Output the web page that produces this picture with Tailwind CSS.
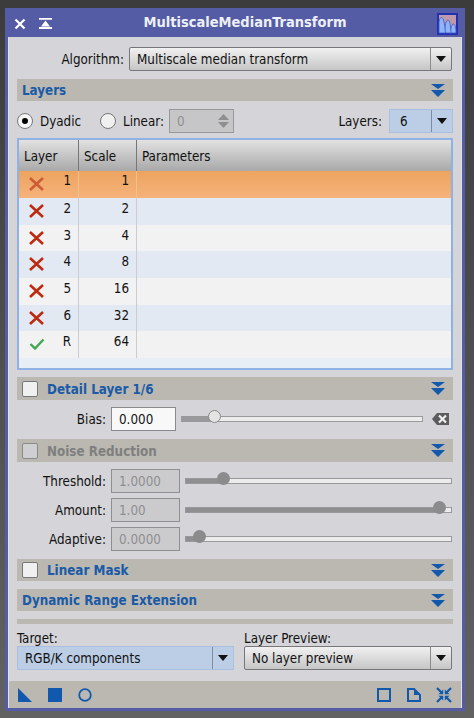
<!DOCTYPE html>
<html>
    <head>
        <meta name="viewport" content="width=device-width, initial-scale=1.0">
        <title>MultiscaleMedianTransform</title>
        <script src="https://cdn.jsdelivr.net/npm/@tailwindcss/browser@4"></script>
    </head>
    <body class="w-[474px] h-[718px] overflow-hidden bg-gradient-to-b from-[#3c3c3c] to-[#626262] font-['DejaVu_Sans_Condensed','DejaVu_Sans',sans-serif] text-[13.3px] text-[#111]">
        <div class="ml-[5px] mt-[8px] w-[460px] h-[703px] bg-[#545ca6] px-[3px] pb-[3px] flex flex-col">
            <!-- title bar -->
            <div class="h-[29px] shrink-0 flex items-center relative">
                <svg class="absolute left-[6px] top-[10px]" width="12" height="12" viewBox="0 0 12 12"><path d="M1.5 1.5L10.5 10.5M10.5 1.5L1.5 10.5" stroke="#fff" stroke-width="2.2"/></svg>
                <svg class="absolute left-[31px] top-[10px]" width="13" height="11" viewBox="0 0 13 11"><path d="M0 0H13V1.8H0ZM6.5 2.6L11 8.6H2ZM0 9H13V11H0Z" fill="#fff"/></svg>
                <div class="w-full text-center font-bold text-[14.5px] text-[#eef0f8] pl-[20px]">MultiscaleMedianTransform</div>
                <svg class="absolute left-[429px] top-[5px]" width="21" height="22" viewBox="0 0 21 22"><rect x="1" y="1" width="19" height="20" fill="#bd9aaa" stroke="#2430b0" stroke-width="2"/><path d="M13 20C14 14 15 11 16.5 11C18 11 19 15 19 20Z" fill="#8fb5f7" stroke="#3f55c8" stroke-width="0.8"/><path d="M7.5 20C8 12 9 7 11 7C13 7 13.5 13 14 20Z" fill="#8fb5f7" stroke="#3f55c8" stroke-width="0.8"/><path d="M2 20V9C3 3 6 3 7 9C8 13 8 17 8.5 20Z" fill="#8fb5f7" stroke="#3f55c8" stroke-width="0.8"/></svg>
            </div>
            <!-- content -->
            <div class="flex-1 bg-[#d5d5d9] flex flex-col border-x border-[#e2e2e5]">
                <div class="flex-1 px-[8px] pt-[10px]">
                    <div class="flex items-center h-[24px] gap-[5px]">
                        <div class="w-[107px] text-right pt-[2px]">Algorithm:</div>
                        <div class="w-[323px] h-[24px] flex items-center border border-[#77777a] rounded-[2px] bg-gradient-to-b from-[#f1f1f1] to-[#c6c6c6]">
                            <div class="flex-1 pl-[7px] pt-[2px]">Multiscale median transform</div>
                            <div class="w-[21px] h-full border-l border-[#8a8a8a] flex items-center justify-center">
                                <svg width="10" height="6" viewBox="0 0 10 6"><path d="M0 0H10L5 6Z" fill="#111"/></svg>
                            </div>
                        </div>
                    </div>
                    <div class="mt-[8px] h-[22px] bg-[#bab8b1] flex items-center justify-between pl-[5px] pr-[8px] font-bold text-[#1a5aa6]">
                        <span class="pt-[2px]">Layers</span>
                        <svg width="14" height="13" viewBox="0 0 14 13"><path d="M0 0H14L7 5ZM0 6H14L7 13Z" fill="#1259ad"/></svg>
                    </div>
                    <div class="mt-[8px] h-[24px] flex items-center">
                        <div class="w-[16px] h-[16px] rounded-full border border-[#777] bg-[#f5f5f5] flex items-center justify-center"><div class="w-[6px] h-[6px] rounded-full bg-black"></div></div>
                        <span class="ml-[7px] w-[60px] pt-[2px]">Dyadic</span>
                        <div class="w-[16px] h-[16px] rounded-full border border-[#777] bg-[#f0f0f0]"></div>
                        <span class="ml-[7px] w-[46px] pt-[2px]">Linear:</span>
                        <div class="w-[65px] h-[24px] border border-[#98989a] bg-[#c6c6c8] flex items-center justify-between pl-[7px] pr-[2px] text-[#8e8e90]">
                            <span class="pt-[2px]">0</span>
                            <div class="flex flex-col gap-[2px] items-center w-[16px]">
                                <svg width="11" height="6" viewBox="0 0 11 6"><path d="M0 6H11L5.5 0Z" fill="#8f8f92"/></svg>
                                <svg width="11" height="6" viewBox="0 0 11 6"><path d="M0 0H11L5.5 6Z" fill="#8f8f92"/></svg>
                            </div>
                        </div>
                        <span class="ml-auto pt-[2px]">Layers:</span>
                        <div class="ml-[7px] w-[64px] h-[24px] flex items-center border border-[#a9bfdf] bg-[#bccde6]">
                            <div class="flex-1 pl-[10px] pt-[2px]">6</div>
                            <div class="w-[21px] h-full border-l border-[#7f8da3] flex items-center justify-center">
                                <svg width="10" height="6" viewBox="0 0 10 6"><path d="M0 0H10L5 6Z" fill="#111"/></svg>
                            </div>
                        </div>
                    </div>
                    <!-- layers table -->
                    <div class="mt-[5px] h-[232px] border-2 border-[#8fb1e3] bg-[#e8eef6]">
                        <div class="h-[31px] flex items-center bg-gradient-to-b from-[#e2e2e2] to-[#a9a9a9]">
                            <div class="w-[60px] pl-[5px] pt-[2px] h-full flex items-center border-r border-[#77777a]">Layer</div>
                            <div class="w-[58px] pl-[5px] pt-[2px] h-full flex items-center border-r border-[#77777a]">Scale</div>
                            <div class="flex-1 pl-[5px] pt-[2px]">Parameters</div>
                        </div>
                        <div class="h-[27px] flex bg-gradient-to-b from-[#eda45f] to-[#f5b27a]">
                            <div class="w-[60px] flex justify-between pl-[10px] pr-[7px] border-r border-[#f3c08f]">
                                <svg class="mt-[6px] opacity-60" width="15" height="14" viewBox="0 0 15 14"><path d="M1 1L14 13M14 1L1 13" stroke="#b52a14" stroke-width="2.6"/></svg><span>1</span>
                            </div>
                            <div class="w-[58px] text-right pr-[7px] border-r border-[#f3c08f]">1</div>
                        </div>
                        <div class="h-[27px] flex bg-[#e3e9f3]">
                            <div class="w-[60px] flex justify-between pl-[10px] pr-[7px] border-r border-[#c9ccd2]">
                                <svg class="mt-[6px]" width="15" height="14" viewBox="0 0 15 14"><path d="M1 1L14 13M14 1L1 13" stroke="#bd2a10" stroke-width="2.6"/></svg><span class="pt-[1px]">2</span>
                            </div>
                            <div class="w-[58px] text-right pr-[7px] pt-[1px] border-r border-[#c9ccd2]">2</div>
                        </div>
                        <div class="h-[26px] flex bg-[#f2f2f2]">
                            <div class="w-[60px] flex justify-between pl-[10px] pr-[7px] border-r border-[#c9ccd2]">
                                <svg class="mt-[6px]" width="15" height="14" viewBox="0 0 15 14"><path d="M1 1L14 13M14 1L1 13" stroke="#bd2a10" stroke-width="2.6"/></svg><span class="pt-[1px]">3</span>
                            </div>
                            <div class="w-[58px] text-right pr-[7px] pt-[1px] border-r border-[#c9ccd2]">4</div>
                        </div>
                        <div class="h-[27px] flex bg-[#e3e9f3]">
                            <div class="w-[60px] flex justify-between pl-[10px] pr-[7px] border-r border-[#c9ccd2]">
                                <svg class="mt-[6px]" width="15" height="14" viewBox="0 0 15 14"><path d="M1 1L14 13M14 1L1 13" stroke="#bd2a10" stroke-width="2.6"/></svg><span class="pt-[1px]">4</span>
                            </div>
                            <div class="w-[58px] text-right pr-[7px] pt-[1px] border-r border-[#c9ccd2]">8</div>
                        </div>
                        <div class="h-[27px] flex bg-[#f2f2f2]">
                            <div class="w-[60px] flex justify-between pl-[10px] pr-[7px] border-r border-[#c9ccd2]">
                                <svg class="mt-[6px]" width="15" height="14" viewBox="0 0 15 14"><path d="M1 1L14 13M14 1L1 13" stroke="#bd2a10" stroke-width="2.6"/></svg><span class="pt-[1px]">5</span>
                            </div>
                            <div class="w-[58px] text-right pr-[7px] pt-[1px] border-r border-[#c9ccd2]">16</div>
                        </div>
                        <div class="h-[26px] flex bg-[#e3e9f3]">
                            <div class="w-[60px] flex justify-between pl-[10px] pr-[7px] border-r border-[#c9ccd2]">
                                <svg class="mt-[6px]" width="15" height="14" viewBox="0 0 15 14"><path d="M1 1L14 13M14 1L1 13" stroke="#bd2a10" stroke-width="2.6"/></svg><span class="pt-[1px]">6</span>
                            </div>
                            <div class="w-[58px] text-right pr-[7px] pt-[1px] border-r border-[#c9ccd2]">32</div>
                        </div>
                        <div class="h-[27px] flex bg-[#f2f2f2]">
                            <div class="w-[60px] flex justify-between pl-[10px] pr-[7px] border-r border-[#c9ccd2]">
                                <svg class="mt-[7px]" width="16" height="12" viewBox="0 0 16 12"><path d="M1.5 6L6 10.5L14.5 1.5" fill="none" stroke="#3fa652" stroke-width="2.4"/></svg><span class="pt-[1px]">R</span>
                            </div>
                            <div class="w-[58px] text-right pr-[7px] pt-[1px] border-r border-[#c9ccd2]">64</div>
                        </div>
                    </div>
                    <!-- detail layer -->
                    <div class="mt-[7px] h-[23px] bg-[#bab8b1] flex items-center pl-[5px] pr-[8px] font-bold text-[#1a5aa6]">
                        <div class="w-[16px] h-[16px] border border-[#777] rounded-[2px] bg-[#f0f0f0]"></div>
                        <span class="ml-[9px] flex-1 pt-[2px]">Detail Layer 1/6</span>
                        <svg width="14" height="13" viewBox="0 0 14 13"><path d="M0 0H14L7 5ZM0 6H14L7 13Z" fill="#1259ad"/></svg>
                    </div>
                    <div class="mt-[7px] h-[24px] flex items-center">
                        <div class="w-[89px] text-right pt-[2px]">Bias:</div>
                        <div class="ml-[5px] w-[65px] h-[24px] border border-[#8a8a8a] bg-[#f8f8f8] flex items-center pl-[7px] pt-[2px]">0.000</div>
                        <div class="ml-[5px] w-[242px] h-[6px] relative border border-[#99999b] bg-[#ececec]">
                            <div class="h-full w-[30px] bg-[#99999b]"></div>
                            <div class="absolute left-[26px] top-[-7px] w-[13px] h-[13px] rounded-full border border-[#8a8a8a] bg-[#e4e4e4]"></div>
                        </div>
                        <svg class="ml-[9px]" width="17" height="12" viewBox="0 0 17 12"><path d="M5 0H17V12H5L0 6Z" fill="#5c5c5e"/><path d="M7 2.5L14 9.5M14 2.5L7 9.5" stroke="#f0f0f0" stroke-width="2.2"/></svg>
                    </div>
                    <!-- noise reduction -->
                    <div class="mt-[8px] h-[23px] bg-[#bab8b1] flex items-center pl-[5px] pr-[8px] font-bold text-[#7f7f7f]">
                        <div class="w-[16px] h-[16px] border border-[#8a8a8a] rounded-[2px] bg-[#cfcfd1]"></div>
                        <span class="ml-[9px] flex-1 pt-[2px]">Noise Reduction</span>
                        <svg width="14" height="13" viewBox="0 0 14 13"><path d="M0 0H14L7 5ZM0 6H14L7 13Z" fill="#1259ad"/></svg>
                    </div>
                    <div class="mt-[7px] h-[24px] flex items-center">
                        <div class="w-[89px] text-right pt-[2px]">Threshold:</div>
                        <div class="ml-[5px] w-[69px] h-[24px] border border-[#8f8f8f] bg-[#cbcbcd] text-[#8e8e90] flex items-center pl-[7px] pt-[2px]">1.0000</div>
                        <div class="ml-[5px] w-[267px] h-[6px] relative border border-[#99999b] bg-[#ececec]">
                            <div class="h-full w-[37px] bg-[#8f8f91]"></div>
                            <div class="absolute left-[31px] top-[-7px] w-[13px] h-[13px] rounded-full bg-[#8b8b8d]"></div>
                        </div>
                    </div>
                    <div class="mt-[5px] h-[24px] flex items-center">
                        <div class="w-[89px] text-right pt-[2px]">Amount:</div>
                        <div class="ml-[5px] w-[69px] h-[24px] border border-[#8f8f8f] bg-[#cbcbcd] text-[#8e8e90] flex items-center pl-[7px] pt-[2px]">1.00</div>
                        <div class="ml-[5px] w-[267px] h-[6px] relative border border-[#99999b] bg-[#ececec]">
                            <div class="h-full w-[253px] bg-[#8f8f91]"></div>
                            <div class="absolute left-[247px] top-[-7px] w-[13px] h-[13px] rounded-full bg-[#8b8b8d]"></div>
                        </div>
                    </div>
                    <div class="mt-[5px] h-[24px] flex items-center">
                        <div class="w-[89px] text-right pt-[2px]">Adaptive:</div>
                        <div class="ml-[5px] w-[69px] h-[24px] border border-[#8f8f8f] bg-[#cbcbcd] text-[#8e8e90] flex items-center pl-[7px] pt-[2px]">0.0000</div>
                        <div class="ml-[5px] w-[267px] h-[6px] relative border border-[#99999b] bg-[#ececec]">
                            <div class="h-full w-[13px] bg-[#8f8f91]"></div>
                            <div class="absolute left-[7px] top-[-7px] w-[13px] h-[13px] rounded-full bg-[#8b8b8d]"></div>
                        </div>
                    </div>
                    <!-- collapsed sections -->
                    <div class="mt-[8px] h-[22px] bg-[#bab8b1] flex items-center pl-[5px] pr-[8px] font-bold text-[#1a5aa6]">
                        <div class="w-[16px] h-[16px] border border-[#777] rounded-[2px] bg-[#f0f0f0]"></div>
                        <span class="ml-[9px] flex-1 pt-[2px]">Linear Mask</span>
                        <svg width="14" height="13" viewBox="0 0 14 13"><path d="M0 0H14L7 5ZM0 6H14L7 13Z" fill="#1259ad"/></svg>
                    </div>
                    <div class="mt-[8px] h-[22px] bg-[#bab8b1] flex items-center justify-between pl-[5px] pr-[8px] font-bold text-[#1a5aa6]">
                        <span class="pt-[2px]">Dynamic Range Extension</span>
                        <svg width="14" height="13" viewBox="0 0 14 13"><path d="M0 0H14L7 5ZM0 6H14L7 13Z" fill="#1259ad"/></svg>
                    </div>
                    <div class="mt-[8px] h-[5px] bg-[#bab8b1]"></div>
                    <!-- target and preview -->
                    <div class="mt-[5px] flex gap-[10px]">
                        <div class="w-[217px]">
                            <div class="h-[17px] leading-[19px]">Target:</div>
                            <div class="h-[24px] flex items-center border border-[#a9bfdf] bg-[#bccde6]">
                                <div class="flex-1 pl-[7px] pt-[2px]">RGB/K components</div>
                                <div class="w-[21px] h-full border-l border-[#7f8da3] flex items-center justify-center">
                                    <svg width="10" height="6" viewBox="0 0 10 6"><path d="M0 0H10L5 6Z" fill="#111"/></svg>
                                </div>
                            </div>
                        </div>
                        <div class="w-[208px]">
                            <div class="h-[17px] leading-[19px]">Layer Preview:</div>
                            <div class="h-[24px] flex items-center border border-[#77777a] rounded-[2px] bg-gradient-to-b from-[#f1f1f1] to-[#c6c6c6]">
                                <div class="flex-1 pl-[7px] pt-[2px]">No layer preview</div>
                                <div class="w-[21px] h-full border-l border-[#8a8a8a] flex items-center justify-center">
                                    <svg width="10" height="6" viewBox="0 0 10 6"><path d="M0 0H10L5 6Z" fill="#111"/></svg>
                                </div>
                            </div>
                        </div>
                    </div>
                </div>
                <!-- bottom toolbar -->
                <div class="h-[27px] shrink-0 bg-[#bab8b1] flex items-center pl-[9px] pr-[9px]">
                    <svg width="14" height="14" viewBox="0 0 14 14"><path d="M0 0L14 14H0Z" fill="#1259ad"/></svg>
                    <svg class="ml-[16px]" width="14" height="14" viewBox="0 0 14 14"><rect width="14" height="14" fill="#1259ad"/></svg>
                    <svg class="ml-[16px]" width="14" height="14" viewBox="0 0 14 14"><circle cx="7" cy="7" r="5.8" fill="none" stroke="#1259ad" stroke-width="1.8"/></svg>
                    <svg class="ml-auto" width="14" height="14" viewBox="0 0 14 14"><rect x="1" y="1" width="12" height="12" fill="none" stroke="#1259ad" stroke-width="2"/></svg>
                    <svg class="ml-[16px]" width="14" height="14" viewBox="0 0 14 14"><path d="M1 1H7L13 7V13H1Z" fill="none" stroke="#1259ad" stroke-width="2"/><path d="M7 1L13 7H7Z" fill="#1259ad"/></svg>
                    <svg class="ml-[15px]" width="16" height="16" viewBox="0 0 16 16"><path d="M1 1L6.5 6.5M15 1L9.5 6.5M1 15L6.5 9.5M15 15L9.5 9.5" stroke="#1259ad" stroke-width="2.2"/><path d="M2.5 7.2H7.2V2.5ZM13.5 7.2H8.8V2.5ZM2.5 8.8H7.2V13.5ZM13.5 8.8H8.8V13.5Z" fill="#1259ad"/></svg>
                </div>
            </div>
        </div>
    </body>
</html>
